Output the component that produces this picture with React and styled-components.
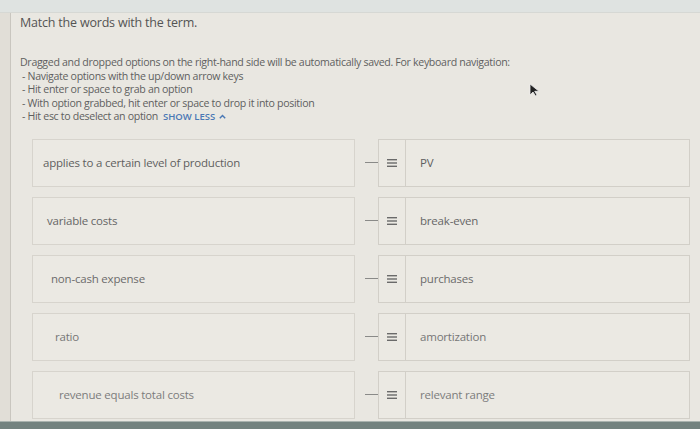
import React from "react";
import styled, { createGlobalStyle } from "styled-components";

const Global = createGlobalStyle`
  html, body { margin: 0; padding: 0; }
  body {
    width: 700px; height: 429px; overflow: hidden;
    background: #e8e6e0;
    font-family: "Open Sans", "Noto Sans", sans-serif;
  }
`;

const Screen = styled.div`
  position: relative;
  width: 700px;
  height: 429px;
  display: flex;
  flex-direction: column;
  background: #e9e7e1;
`;

const TopStrip = styled.div`
  height: 12px;
  background: #dfe3e1;
  border-bottom: 1px solid #d6d8d4;
`;

const Body = styled.div`
  flex: 1;
  display: flex;
  min-height: 0;
`;

const Gutter = styled.div`
  width: 10px;
  background: #e1ded7;
  border-right: 1px solid #c9c6bf;
`;

const Panel = styled.div`
  flex: 1;
  padding: 2px 0 0 9px;
  display: flex;
  flex-direction: column;
`;

const Title = styled.h1`
  margin: 0;
  font-size: 12.5px;
  line-height: 16px;
  font-weight: 400;
  color: #545454;
  letter-spacing: -0.2px;
`;

const Instructions = styled.div`
  margin-top: 25px;
  font-size: 10.6px;
  line-height: 13.5px;
  color: #5f5f5f;
  letter-spacing: -0.32px;
`;

const Line = styled.div`
  padding-left: ${(p) => (p.$indent ? "2px" : "0")};
`;

const ShowLess = styled.span`
  display: inline-flex;
  align-items: center;
  gap: 4px;
  color: #4a78b5;
  font-weight: 600;
  margin-left: 5px;
  font-size: 9.5px;
  letter-spacing: 0;
`;

const List = styled.div`
  margin-top: 15px;
  display: flex;
  flex-direction: column;
  gap: 10px;
`;

const Row = styled.div`
  display: flex;
  align-items: center;
  height: 48px;
`;

const LeftCard = styled.div`
  margin-left: 12px;
  width: 323px;
  height: 100%;
  box-sizing: border-box;
  border: 1px solid #d7d4cd;
  background: #ebe9e3;
  display: flex;
  align-items: center;
  padding-left: ${(p) => p.$pad}px;
  font-size: 11.5px;
  color: ${(p) => p.$color};
  letter-spacing: -0.2px;
`;

const Connector = styled.div`
  width: 13px;
  height: 1px;
  margin-left: 10px;
  background: #8a8a88;
`;

const RightBox = styled.div`
  width: 312px;
  height: 100%;
  box-sizing: border-box;
  border: 1px solid #d2cfc8;
  background: #ebe9e3;
  display: flex;
  align-items: stretch;
`;

const Handle = styled.div`
  width: 26px;
  border-right: 1px solid #d2cfc8;
  display: flex;
  align-items: center;
  justify-content: center;
`;

const RightText = styled.div`
  display: flex;
  align-items: center;
  padding-left: 14px;
  font-size: 11.5px;
  color: ${(p) => p.$color};
  letter-spacing: -0.2px;
`;

const Bottom = styled.div`
  height: 7px;
  background: #73827f;
  border-top: 1px solid #a9b2ae;
`;

const Cursor = styled.svg`
  position: absolute;
  left: 529px;
  top: 83px;
`;

const Grip = () => (
  <svg width="10" height="8" viewBox="0 0 10 8">
    <rect x="0" y="0" width="10" height="1.4" fill="#6a6a6a" />
    <rect x="0" y="3.3" width="10" height="1.4" fill="#6a6a6a" />
    <rect x="0" y="6.6" width="10" height="1.4" fill="#6a6a6a" />
  </svg>
);

const Caret = () => (
  <svg width="7" height="5" viewBox="0 0 7 5">
    <path d="M0.8 4.2 L3.5 1.4 L6.2 4.2" fill="none" stroke="#4a78b5" strokeWidth="1.4" />
  </svg>
);

const rows = [
  { left: "applies to a certain level of production", right: "PV", pad: 10, c: "#5f5f5f" },
  { left: "variable costs", right: "break-even", pad: 14, c: "#666" },
  { left: "non-cash expense", right: "purchases", pad: 18, c: "#6b6b6b" },
  { left: "ratio", right: "amortization", pad: 22, c: "#767676" },
  { left: "revenue equals total costs", right: "relevant range", pad: 26, c: "#7c7c7c" },
];

export default function App() {
  return (
    <>
      <Global />
      <Screen>
        <TopStrip />
        <Body>
          <Gutter />
          <Panel>
            <Title>Match the words with the term.</Title>
            <Instructions>
              <Line>
                Dragged and dropped options on the right-hand side will be automatically saved. For keyboard navigation:
              </Line>
              <Line $indent>- Navigate options with the up/down arrow keys</Line>
              <Line $indent>- Hit enter or space to grab an option</Line>
              <Line $indent>- With option grabbed, hit enter or space to drop it into position</Line>
              <Line $indent>
                - Hit esc to deselect an option
                <ShowLess>
                  SHOW LESS <Caret />
                </ShowLess>
              </Line>
            </Instructions>
            <List>
              {rows.map((r) => (
                <Row key={r.left}>
                  <LeftCard $pad={r.pad} $color={r.c}>{r.left}</LeftCard>
                  <Connector />
                  <RightBox>
                    <Handle>
                      <Grip />
                    </Handle>
                    <RightText $color={r.c}>{r.right}</RightText>
                  </RightBox>
                </Row>
              ))}
            </List>
          </Panel>
        </Body>
        <Bottom />
        <Cursor width="12" height="14" viewBox="0 0 12 14">
          <path d="M1 1 L1 12 L4 9 L6.5 13 L8 12 L5.7 8.3 L10 8.3 Z" fill="#222" stroke="#eee" strokeWidth="0.8" />
        </Cursor>
      </Screen>
    </>
  );
}
